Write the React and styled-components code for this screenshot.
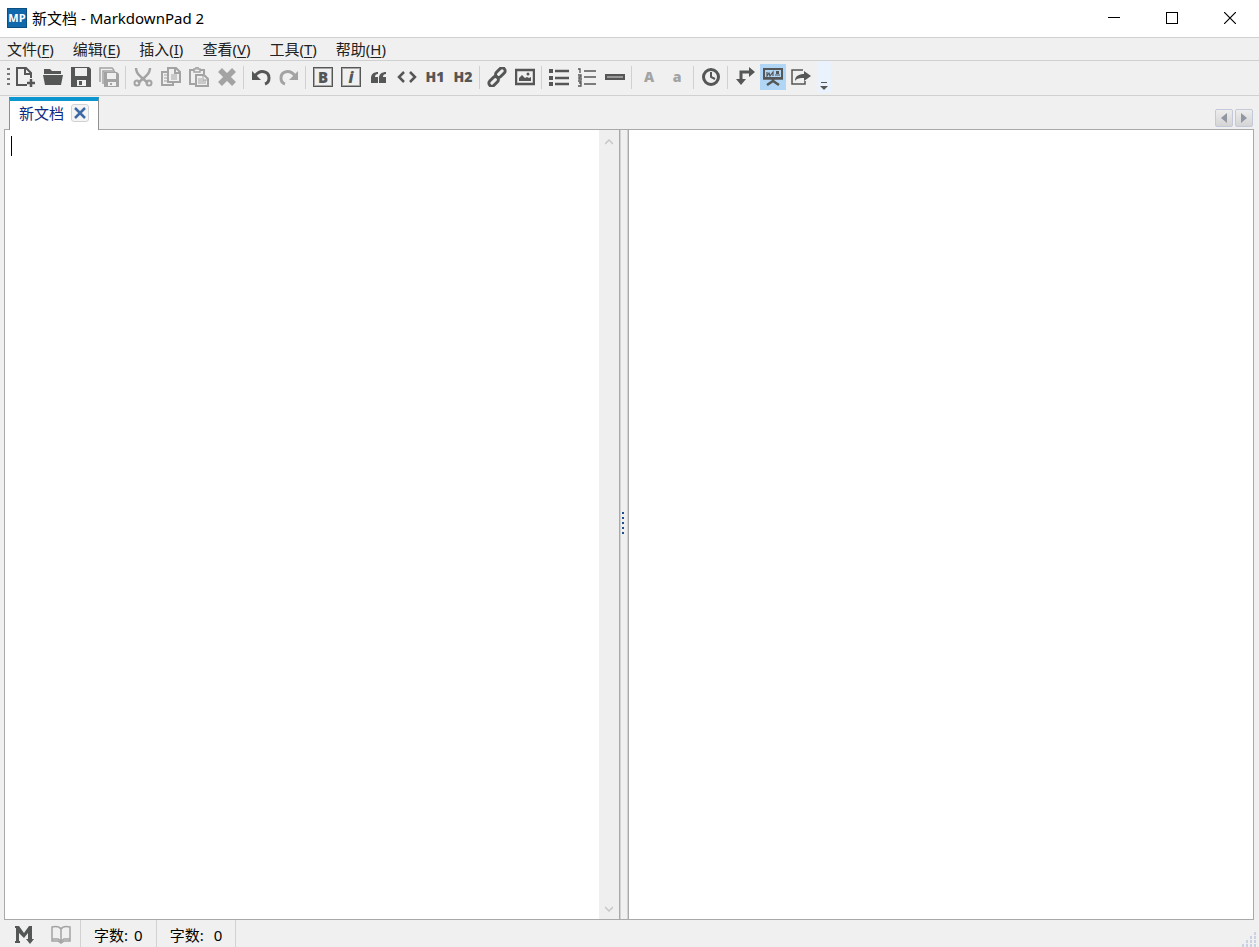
import React, { useState } from 'react';
import styled, { createGlobalStyle, css } from 'styled-components';

const GlobalStyle = createGlobalStyle`
  * {
    box-sizing: border-box;
  }

  body {
    margin: 0;
    background: #f0f0f0;
    color: #000;
    font-family: "Noto Sans", "Noto Sans CJK SC", sans-serif;
    font-size: 15px;
    line-height: 20px;
  }

  button, textarea {
    margin: 0;
    padding: 0;
    border: 0;
    background: none;
    color: inherit;
    font: inherit;
  }

  svg {
    display: block;
  }
`;

const Window = styled.div`
  display: flex;
  flex-direction: column;
  height: 100vh;
  overflow: hidden;
`;

/* Title bar */

const TitleBar = styled.header`
  display: flex;
  align-items: center;
  height: 38px;
  padding: 0 0 2px 7px;
  border-bottom: 1px solid #d0d0d0;
  background: #fff;
`;

const Logo = styled.span`
  width: 20px;
  height: 20px;
  border: 1px solid #0a4f80;
  background: #1069ab;
  color: #fff;
  font-family: "Open Sans", sans-serif;
  font-size: 11px;
  font-weight: 700;
  line-height: 18px;
  text-align: center;
`;

const Title = styled.h1`
  flex: 1;
  margin: 0 0 0 5px;
  font-size: 15px;
  font-weight: 400;
`;

const WindowButton = styled.button`
  display: flex;
  align-items: center;
  justify-content: center;
  width: 58px;
  height: 35px;

  &:hover {
    background: #e5e5e5;
  }
`;

/* Menu */

const MenuBar = styled.nav`
  display: flex;
  align-items: center;
  gap: 19px;
  height: 23px;
  padding-left: 7px;
  border-bottom: 1px solid #d0d0d0;
`;

const MenuItem = styled.button`
  color: #222;
  white-space: nowrap;

  u {
    text-underline-offset: 2px;
  }
`;

/* Toolbar */

const ToolBar = styled.div`
  display: flex;
  align-items: center;
  height: 35px;
  padding: 0 0 2px 7px;
  border-bottom: 1px solid #d0d0d0;
`;

const Grip = styled.span`
  width: 3px;
  height: 18px;
  margin-right: 1px;
  background: repeating-linear-gradient(#777 0 2px, transparent 2px 5px);
`;

const ToolButton = styled.button`
  display: flex;
  align-items: center;
  justify-content: center;
  width: 26px;
  height: 26px;
  margin: 0 1px;
  color: ${({ $faded }) => ($faded ? '#a3a3a3' : '#555656')};
  font-family: "Open Sans", sans-serif;
  font-size: 14px;
  font-weight: 800;

  ${({ $active }) => $active && css`
    background: #b0d5f5;
  `}

  &:hover {
    background: #b0d5f5;
  }
`;

const Separator = styled.span`
  width: 1px;
  height: 23px;
  margin: 0 3px 0 2px;
  background: #d0d0d0;
`;

const Boxed = styled.span`
  width: 20px;
  height: 20px;
  border: 1px solid #555656;
  box-shadow: inset 0 0 0 1px #a8a8a8;
  font-size: 15px;
  font-style: ${({ $italic }) => ($italic ? 'italic' : 'normal')};
  line-height: 18px;
  text-align: center;
`;

const Overflow = styled.button`
  display: flex;
  align-items: flex-end;
  justify-content: center;
  width: 14px;
  height: 32px;
  margin-left: 2px;
  padding-bottom: 3px;
  border-radius: 3px;
  background: #eaf2fd;
`;

/* Tabs */

const TabRow = styled.div`
  display: flex;
  align-items: flex-end;
  justify-content: space-between;
  height: 33px;
  padding: 0 6px 0 9px;
`;

const Tab = styled.div`
  display: flex;
  align-items: center;
  gap: 7px;
  width: 90px;
  height: 33px;
  margin-bottom: -1px;
  padding: 0 8px 5px 9px;
  border: 1px solid #909090;
  border-top: 4px solid #0b96d0;
  border-bottom: 0;
  background: #fff;
  color: #0d2b84;
  z-index: 1;
`;

const TabName = styled.button`
  white-space: nowrap;
`;

const CloseTab = styled.button`
  display: flex;
  align-items: center;
  justify-content: center;
  width: 18px;
  height: 18px;
  border: 1px solid #d2d2d6;
  border-radius: 3px;
  background: #f4f4f4;
`;

const Arrows = styled.div`
  display: flex;
  gap: 2px;
  padding-bottom: 2px;
`;

const Arrow = styled.button`
  display: flex;
  align-items: center;
  justify-content: center;
  width: 18px;
  height: 18px;
  border: 1px solid #c3c8da;
  border-radius: 2px;
  background: linear-gradient(#ededed, #d4d4d4);
`;

/* Editor and preview */

const Panes = styled.main`
  display: grid;
  grid-template-columns: 614fr 10px 624fr;
  flex: 1;
  min-height: 0;
  margin: 0 5px 0 4px;
  border: 1px solid #a9a9a9;
`;

const EditorPane = styled.section`
  position: relative;
  display: flex;
  min-width: 0;
  background: #fff;
`;

const Editor = styled.textarea`
  flex: 1;
  min-width: 0;
  padding: 6px;
  caret-color: transparent;
  outline: none;
  resize: none;
`;

const Caret = styled.span`
  position: absolute;
  top: 6px;
  left: 6px;
  width: 1px;
  height: 20px;
  background: #000;
`;

const ScrollBar = styled.div`
  display: flex;
  flex-direction: column;
  align-items: center;
  justify-content: space-between;
  width: 20px;
  padding: 8px 0 6px;
  background: #efefef;
`;

const Splitter = styled.div`
  display: flex;
  align-items: center;
  padding: 0 0 4px 2px;
  border: solid #a9a9a9;
  border-width: 0 1px;
  background: #f0f0f0;
  box-shadow: inset 1px 0 #d2d2d2, inset -1px 0 #d2d2d2;
  cursor: col-resize;
`;

const SplitterDots = styled.span`
  width: 2px;
  height: 22px;
  background: repeating-linear-gradient(#1d4f91 0 2px, transparent 2px 5px);
`;

const Preview = styled.section`
  background: #fff;
`;

/* Status bar */

const StatusBar = styled.footer`
  display: flex;
  height: 27px;
`;

const StatusIcons = styled.div`
  display: flex;
  align-items: center;
  gap: 17px;
  width: 81px;
  padding: 2px 0 0 14px;
  border-right: 1px solid #d2d2d2;
`;

const Count = styled.div`
  display: flex;
  align-items: center;
  gap: ${({ $gap }) => $gap}px;
  padding: 2px 13px 0;
  border-right: 1px solid #d2d2d2;
`;

const ResizeGrip = styled.span`
  display: flex;
  align-items: flex-end;
  margin-left: auto;
  padding-right: 2px;
`;

const Icon = ({ children, size = 20, ...rest }) => (
  <svg width={size} height={size} viewBox={`0 0 ${size} ${size}`} fill="none" stroke="currentColor" strokeWidth="2" aria-hidden="true" {...rest}>
    {children}
  </svg>
);

const icons = {
  newFile: (
    <Icon>
      <path d="M12 18H2V1h9l5 5v5M10 1v6h6" />
      <path d="M16 12v8M12 16h8" strokeWidth="2.5" />
    </Icon>
  ),
  open: (
    <Icon fill="currentColor" stroke="none">
      <path d="M1 2h6l2 2h9v3H1zM0 8h20l-2 10H2z" />
    </Icon>
  ),
  save: (
    <Icon fill="currentColor" stroke="none">
      <path fillRule="evenodd" d="M0 0h18l2 2v18H0zM4 1v8h12V1zM6 13v6h9v-6zM8 14h3v4H8z" />
    </Icon>
  ),
  saveAll: (
    <Icon>
      <path d="M1 15V1h12l2 2M4 17V4h11l1 1" strokeWidth="1.5" />
      <path fill="currentColor" stroke="none" fillRule="evenodd" d="M5 5h13l2 2v13H5zM8 6v6h9V6zM9 15v4h8v-4zM11 16h2v2h-2z" />
    </Icon>
  ),
  cut: (
    <Icon>
      <path d="M3 1c0 5 3 7 5 9l7 6M17 1c0 5-3 7-5 9l-7 6" strokeWidth="2.5" />
      <circle cx="4" cy="16" r="2.5" />
      <circle cx="16" cy="16" r="2.5" />
    </Icon>
  ),
  copy: (
    <Icon>
      <path d="M7 1h8l4 4v10H7zM14 1v5h5M7 5H1v13h11v-3" />
      <path d="M10 8h6M10 10h6M10 12h6M3 8h3M3 11h3M3 14h3" strokeWidth="1" />
    </Icon>
  ),
  paste: (
    <Icon>
      <path d="M6 17H1V3h4M11 3h4v4" />
      <path d="M5 5V2h2V0h2v2h2v3z" strokeWidth="1.5" />
      <path d="M7 8h8l4 4v7H7z" fill="#f0f0f0" />
      <path d="M14 8v5h5M9 12h4M9 14h8M9 16h8" strokeWidth="1" />
    </Icon>
  ),
  remove: (
    <Icon>
      <path d="M3 3l14 14M17 3L3 17" strokeWidth="5.5" />
    </Icon>
  ),
  undo: (
    <Icon>
      <path d="M4 9C9 2 18 4 18 11c0 3-1 5-4 6" strokeWidth="3" />
      <path d="M1 4v9h9z" fill="currentColor" stroke="none" />
    </Icon>
  ),
  redo: (
    <Icon>
      <path d="M16 9C11 2 2 4 2 11c0 3 1 5 4 6" strokeWidth="3" />
      <path d="M19 4v9h-9z" fill="currentColor" stroke="none" />
    </Icon>
  ),
  quote: (
    <Icon fill="currentColor" stroke="none">
      <path d="M9 5v2C7 7 6 8 6 10h3v6H2v-5c0-4 3-6 7-6zM17 5v2c-2 0-3 1-3 3h3v6h-7v-5c0-4 3-6 7-6z" />
    </Icon>
  ),
  code: (
    <Icon>
      <path d="M7 5l-5 5 5 5M13 5l5 5-5 5" strokeWidth="2.5" />
    </Icon>
  ),
  link: (
    <Icon strokeWidth="3">
      <rect x="-6" y="-3" width="11" height="6" rx="3" transform="translate(7 14) rotate(-45)" />
      <rect x="-5" y="-3" width="11" height="6" rx="3" transform="translate(13 6) rotate(-45)" />
    </Icon>
  ),
  image: (
    <Icon>
      <path d="M1 3h18v14H1z" strokeWidth="2.5" />
      <path d="M4 14v-3l3-3 3 3 2-1 2 1 2-1v4z" fill="currentColor" stroke="none" />
      <circle cx="13" cy="7" r="1.5" fill="currentColor" stroke="none" />
    </Icon>
  ),
  bullets: (
    <Icon>
      <path d="M6 4h14M6 11h14M6 17h14" strokeWidth="2.5" />
      <path d="M0 4h4M0 11h4M0 17h4" strokeWidth="4" />
    </Icon>
  ),
  numbers: (
    <Icon>
      <path d="M7 4h12M7 10h12M7 17h12" strokeWidth="1.5" />
      <path d="M1 2h2v4M1 8h3v2H2v2h3M1 14h3v2H2h2v3H1" strokeWidth="1.3" />
    </Icon>
  ),
  rule: (
    <Icon>
      <path d="M1 8h18v4H1z" fill="#999" />
    </Icon>
  ),
  clock: (
    <Icon>
      <circle cx="10" cy="10" r="7.5" strokeWidth="3" />
      <path d="M10 5v5l4 2" />
    </Icon>
  ),
  wrap: (
    <Icon>
      <path d="M6 14V5h8" strokeWidth="3" />
      <path d="M14 0l6 5-6 5zM1 12h10l-5 6z" fill="currentColor" stroke="none" />
    </Icon>
  ),
  preview: (
    <Icon>
      <path d="M1 2h18v9H1z" strokeWidth="2" />
      <path d="M0 12h20" strokeWidth="1.5" />
      <path d="M10 11v4M4 18l6-4 6 4" strokeWidth="2.5" />
      <path d="M4 5v4l2-3 1 3 3-4v4M12 8h5" strokeWidth="1.2" />
      <path d="M13 4h3v3h-3z" fill="currentColor" stroke="none" />
    </Icon>
  ),
  share: (
    <Icon>
      <path d="M12 3H1v14h13v-3" strokeWidth="1.5" />
      <path d="M4 14c0-5 4-7 9-7V4l7 5-7 5v-3c-4 0-7 0-9 3z" fill="currentColor" stroke="none" />
    </Icon>
  ),
};

const groups = [
  [
    { label: '新建', icon: icons.newFile },
    { label: '打开', icon: icons.open },
    { label: '保存', icon: icons.save },
    { label: '全部保存', icon: icons.saveAll, faded: true },
  ],
  [
    { label: '剪切', icon: icons.cut, faded: true },
    { label: '复制', icon: icons.copy, faded: true },
    { label: '粘贴', icon: icons.paste, faded: true },
    { label: '删除', icon: icons.remove, faded: true },
  ],
  [
    { label: '撤销', icon: icons.undo },
    { label: '重做', icon: icons.redo, faded: true },
  ],
  [
    { label: '粗体', icon: <Boxed>B</Boxed> },
    { label: '斜体', icon: <Boxed $italic>i</Boxed> },
    { label: '引用', icon: icons.quote },
    { label: '代码', icon: icons.code },
    { label: '标题 1', icon: 'H1' },
    { label: '标题 2', icon: 'H2' },
  ],
  [
    { label: '链接', icon: icons.link },
    { label: '图片', icon: icons.image },
  ],
  [
    { label: '无序列表', icon: icons.bullets },
    { label: '有序列表', icon: icons.numbers },
    { label: '水平线', icon: icons.rule },
  ],
  [
    { label: '大写', icon: 'A', faded: true },
    { label: '小写', icon: 'a', faded: true },
  ],
  [{ label: '时间', icon: icons.clock }],
  [
    { label: '自动换行', icon: icons.wrap },
    { label: '实时预览', icon: icons.preview, active: true },
    { label: '导出', icon: icons.share },
  ],
];

const menus = [
  ['文件', 'F'],
  ['编辑', 'E'],
  ['插入', 'I'],
  ['查看', 'V'],
  ['工具', 'T'],
  ['帮助', 'H'],
];

const gripDots = [[12, 0], [8, 4], [12, 4], [4, 8], [8, 8], [12, 8], [0, 12], [4, 12], [8, 12], [12, 12]];

const App = () => {
  const [text, setText] = useState('');

  return (
    <>
      <GlobalStyle />
      <Window>
        <TitleBar>
          <Logo>MP</Logo>
          <Title>新文档 - MarkdownPad 2</Title>
          <WindowButton aria-label="最小化">
            <Icon size={12} stroke="#000" strokeWidth="1" shapeRendering="crispEdges"><path d="M0 5.5h12" /></Icon>
          </WindowButton>
          <WindowButton aria-label="最大化">
            <Icon size={12} stroke="#000" strokeWidth="1" shapeRendering="crispEdges"><path d="M.5.5h11v11H.5z" /></Icon>
          </WindowButton>
          <WindowButton aria-label="关闭">
            <Icon size={12} stroke="#000" strokeWidth="1.2"><path d="M0 0l12 12M12 0L0 12" /></Icon>
          </WindowButton>
        </TitleBar>

        <MenuBar>
          {menus.map(([name, key]) => (
            <MenuItem key={key}>{name}(<u>{key}</u>)</MenuItem>
          ))}
        </MenuBar>

        <ToolBar>
          <Grip />
          {groups.map((group, index) => (
            <React.Fragment key={group[0].label}>
              {index > 0 && <Separator />}
              {group.map(({ label, icon, faded, active }) => (
                <ToolButton key={label} aria-label={label} $faded={faded} $active={active}>
                  {icon}
                </ToolButton>
              ))}
            </React.Fragment>
          ))}
          <Overflow aria-label="更多">
            <Icon size={8} stroke="none" fill="#555656"><path d="M1 0h6v1H1zM0 4h8L4 8z" /></Icon>
          </Overflow>
        </ToolBar>

        <TabRow>
          <Tab>
            <TabName>新文档</TabName>
            <CloseTab aria-label="关闭标签">
              <Icon size={12} stroke="#3d6aa5" strokeWidth="2.5"><path d="M1 1l10 10M11 1L1 11" /></Icon>
            </CloseTab>
          </Tab>
          <Arrows>
            <Arrow aria-label="上一个">
              <Icon size={10} stroke="none" fill="#9097a3"><path d="M8 0v10L2 5z" /></Icon>
            </Arrow>
            <Arrow aria-label="下一个">
              <Icon size={10} stroke="none" fill="#9097a3"><path d="M2 0v10l6-5z" /></Icon>
            </Arrow>
          </Arrows>
        </TabRow>

        <Panes>
          <EditorPane>
            <Editor aria-label="编辑器" value={text} onChange={(e) => setText(e.target.value)} />
            {text === '' && <Caret />}
            <ScrollBar>
              <Icon size={8} stroke="#c6c6c6" strokeWidth="1.5"><path d="M0 6l4-4 4 4" /></Icon>
              <Icon size={8} stroke="#c6c6c6" strokeWidth="1.5"><path d="M0 2l4 4 4-4" /></Icon>
            </ScrollBar>
          </EditorPane>
          <Splitter>
            <SplitterDots />
          </Splitter>
          <Preview />
        </Panes>

        <StatusBar>
          <StatusIcons>
            <Icon fill="#555656" stroke="none">
              <path d="M1 1h4l5 7 5-7h3v13h2l-4 5-4-5h2V8l-4 5-5-5v8h1v2H1v-2h1V3H1z" />
            </Icon>
            <Icon stroke="#a3a3a3" strokeWidth="1.5">
              <path d="M10 4C8 1 5 1 1 2v14h6l3 2 3-2h6V2c-4-1-7-1-9 2v13M1 14h6l3 2 3-2h6" />
            </Icon>
          </StatusIcons>
          <Count $gap={6}><span>字数:</span><span>0</span></Count>
          <Count $gap={10}><span>字数:</span><span>0</span></Count>
          <ResizeGrip>
            <Icon size={15} stroke="none" fill="#c9d2e2">
              {gripDots.map(([x, y]) => <rect key={`${x}-${y}`} x={x} y={y} width="2" height="3" />)}
            </Icon>
          </ResizeGrip>
        </StatusBar>
      </Window>
    </>
  );
};

export default App;
